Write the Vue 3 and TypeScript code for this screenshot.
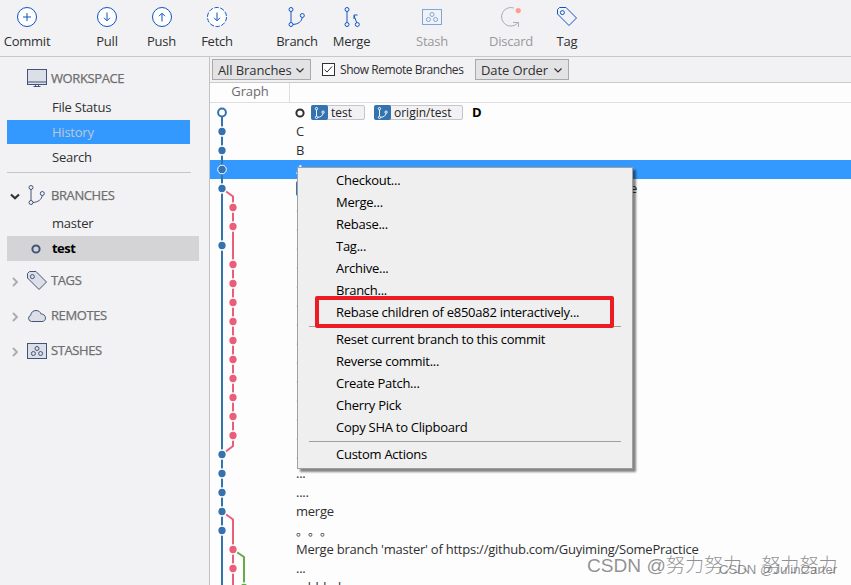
<script setup lang="ts">
import { defineComponent, h } from 'vue'

type Shape = [string, Record<string, string | number>]

const icons: Record<string, Shape[]> = {
  commit: [['circle', { cx: 12, cy: 12, r: 9.5, fill: '#fff' }], ['path', { d: 'M12 8v8M8 12h8' }]],
  pull: [['circle', { cx: 12, cy: 12, r: 9.5, fill: '#fff' }], ['path', { d: 'M12 7.5v8M9 12.8l3 3 3-3' }]],
  push: [['circle', { cx: 12, cy: 12, r: 9.5, fill: '#fff' }], ['path', { d: 'M12 16.5v-8M9 11.2l3-3 3 3' }]],
  fetch: [['circle', { cx: 12, cy: 12, r: 9.5, fill: '#fff', 'stroke-dasharray': '4.4 1.57' }], ['path', { d: 'M12 7.5v8M9 12.8l3 3 3-3' }]],
  branch: [
    ['path', { d: 'M6 6.5v11M17.2 12.5c-.4 4-4 6.6-9.2 7' }],
    ['circle', { cx: 6, cy: 4.5, r: 2 }], ['circle', { cx: 6, cy: 19.5, r: 2 }], ['circle', { cx: 17.3, cy: 10.5, r: 2 }],
  ],
  merge: [
    ['path', { d: 'M7 6.5v11M16.7 17.6L14.2 11M14 14V10h3.500' }],
    ['circle', { cx: 7, cy: 4.5, r: 2 }], ['circle', { cx: 7, cy: 19.5, r: 2 }], ['circle', { cx: 17.3, cy: 19.5, r: 2 }],
  ],
  stash: [
    ['rect', { x: 2.5, y: 4.5, width: 19, height: 15 }],
    ['circle', { cx: 12, cy: 9.5, r: 2 }], ['circle', { cx: 8.4, cy: 14.5, r: 2 }], ['circle', { cx: 15.6, cy: 14.5, r: 2 }],
  ],
  discard: [
    ['path', { d: 'M14.8 3A9.3 9.3 0 1 0 18.8 18M14 17.5h5.5v4.5' }],
    ['circle', { cx: 19.2, cy: 5.6, r: 2.6, fill: '#ff9c8e', stroke: 'none' }],
  ],
  tag: [
    ['path', { d: 'M2.5 4.5l2-2H11L21.5 13 14 20.5 2.5 9z' }],
    ['circle', { cx: 7.4, cy: 7.6, r: 2 }],
  ],
  monitor: [
    ['rect', { x: 2.5, y: 3.5, width: 19, height: 15 }],
    ['path', { d: 'M2.5 16h19M10.5 18.5v2M13.5 18.5v2M8.5 20.5h7' }],
  ],
  cloud: [['path', { d: 'M6.5 17.5a3.2 3.2 0 0 1-.8-6.2C6 8.3 8.2 6.5 11 6.5c2.6 0 4.3 1.4 4.9 3.4 2.6.1 4.6 1.7 4.6 4 0 2.200-1.400 3.600-3.500 3.600z' }]],
  down: [['path', { d: 'M8 10.5l4 3.8 4-3.8', 'stroke-width': 2.2 }]],
  right: [['path', { d: 'M10 8l4 4-4 4', 'stroke-width': 1.8 }]],
  caret: [['path', { d: 'M8.5 10.5L12 14l3.5-3.5', 'stroke-width': 1.2 }]],
  ring: [['circle', { cx: 12, cy: 12, r: 3.6, 'stroke-width': 2 }]],
  check: [['rect', { x: 6.5, y: 5.5, width: 12, height: 12, fill: '#fff' }], ['path', { d: 'M8.5 11.5l2.5 2.6 5-5.6' }]],
}

const Icon = defineComponent({
  props: { name: { type: String, required: true } },
  setup: (props) => () =>
    h('svg', { viewBox: '0 0 24 24', width: 24, height: 24, fill: 'none', stroke: 'currentColor', 'stroke-width': 1 },
      icons[props.name].map(([tag, attrs]) => h(tag, attrs))),
})

const tools = [
  { label: 'Commit', icon: 'commit', col: 1 },
  { label: 'Pull', icon: 'pull', col: 3 },
  { label: 'Push', icon: 'push', col: 4 },
  { label: 'Fetch', icon: 'fetch', col: 5 },
  { label: 'Branch', icon: 'branch', col: 7 },
  { label: 'Merge', icon: 'merge', col: 8 },
  { label: 'Stash', icon: 'stash', col: 10, state: 'off' },
  { label: 'Discard', icon: 'discard', col: 12, state: 'off gray' },
  { label: 'Tag', icon: 'tag', col: 13 },
]

const collapsed = [
  { label: 'TAGS', icon: 'tag' },
  { label: 'REMOTES', icon: 'cloud' },
  { label: 'STASHES', icon: 'stash' },
]

const messages: string[] = [
  'D', 'C', 'B', 'A', 'e',
  ...Array<string>(14).fill('...'),
  '...', '....', 'merge', '。。。',
  "Merge branch 'master' of https://github.com/Guyiming/SomePractice", '...', 'adddad',
]

const menu = [
  ['Checkout...', 'Merge...', 'Rebase...', 'Tag...', 'Archive...', 'Branch...', 'Rebase children of e850a82 interactively...'],
  ['Reset current branch to this commit', 'Reverse commit...', 'Create Patch...', 'Cherry Pick', 'Copy SHA to Clipboard'],
  ['Custom Actions'],
]

const rowY = (row: number): number => row * 19 + 9.5
const blueRows = [1, 2, 4, 7, 18, 19, 20, 21, 22]
const pinkRows = [5, 6, 8, 9, 10, 11, 12, 13, 14, 15, 16, 17, 23, 24]
</script>

<template>
  <div class="app">
    <header class="toolbar">
      <div v-for="t in tools" :key="t.label" class="tool" :class="[t.state, 'c' + t.col]">
        <Icon :name="t.icon" />
        <span>{{ t.label }}</span>
      </div>
    </header>
    <div class="body">
      <aside class="sidebar">
        <div class="section workspace"><i class="chev"></i><Icon name="monitor" class="filled" /><span>WORKSPACE</span></div>
        <div class="entry">File Status</div>
        <div class="entry chosen">History</div>
        <div class="entry search">Search</div>
        <div class="rule"></div>
        <div class="section branches"><Icon name="down" class="chev dark" /><Icon name="branch" /><span>BRANCHES</span></div>
        <div class="entry">master</div>
        <div class="entry current"><Icon name="ring" class="ring" />test</div>
        <div class="groups">
          <div v-for="g in collapsed" :key="g.label" class="section">
            <Icon name="right" class="chev" /><Icon :name="g.icon" class="filled" /><span>{{ g.label }}</span>
          </div>
        </div>
      </aside>
      <main class="main">
        <div class="filters">
          <div class="select all"><span>All Branches</span><Icon name="caret" /></div>
          <div class="check"><Icon name="check" /><span>Show Remote Branches</span></div>
          <div class="select order"><span>Date Order</span><Icon name="caret" /></div>
        </div>
        <div class="head"><div class="graph-head">Graph</div></div>
        <div class="log">
          <div v-for="(m, i) in messages" :key="i" class="row" :class="{ selected: i === 3 }">
            <template v-if="i === 0">
              <Icon name="ring" class="head-ring" />
              <span class="ref"><b><Icon name="branch" /></b><span>test</span></span>
              <span class="ref origin"><b><Icon name="branch" /></b><span>origin/test</span></span>
              <strong>{{ m }}</strong>
            </template>
            <template v-else-if="i === 4">
              <span class="ref"><b><Icon name="branch" /></b></span>
              <span class="tail">{{ m }}</span>
            </template>
            <span v-else :class="{ stops: i === 22 }">{{ m }}</span>
          </div>
          <svg class="graph" width="80" height="482" fill="none" stroke-width="2">
            <path class="blue" d="M12 9.5V482" />
            <path class="pink" d="M12 85.5l11 8V343l-11 8.5M12 408.5l11 8V482" />
            <path class="green" d="M23 446.5l11 7.5V482" />
            <g class="nodes">
              <circle v-for="r in blueRows" :key="'b' + r" class="blue" cx="12" :cy="rowY(r)" r="4.400" />
              <circle v-for="r in pinkRows" :key="'p' + r" class="pink" cx="23" :cy="rowY(r)" r="4.400" />
              <circle class="green" cx="34" :cy="rowY(25)" r="4.400" />
            </g>
            <circle class="blue picked" cx="12" :cy="rowY(3)" r="4.300" />
            <circle class="tip" cx="12" cy="9.5" r="3.900" />
          </svg>
          <div class="menu">
            <div v-for="(group, g) in menu" :key="g" class="group">
              <div v-for="item in group" :key="item" class="item">{{ item }}</div>
            </div>
            <div class="highlight"></div>
          </div>
        </div>
      </main>
    </div>
    <div class="mark big">CSDN @努力努力、努力努力</div>
    <div class="mark small">CSDN @JulinCarter</div>
  </div>
</template>

<style>
body { margin: 0; overflow: hidden; }
</style>

<style scoped>
.app { position: relative; width: 851px; height: 585px; overflow: hidden; display: flex; flex-direction: column; background: #f2f2f5; font: 13px/19px "Open Sans", "Noto Sans", "Noto Sans CJK SC", sans-serif; letter-spacing: -.23px; color: #303030; white-space: nowrap; }
svg { display: block; flex: none; }
.toolbar { height: 56px; flex: none; display: grid; grid-template-columns: 54px 26px 54px 55px 56px 24px 56px 53px 24px 60px 19px 60px 52px; border-bottom: 1px solid #c8c8cb; }
.tool { display: flex; flex-direction: column; align-items: center; padding-top: 5px; color: #0b55c5; grid-row: 1; }
.tool span { color: #303030; margin-top: 3px; }
.tool.off { color: #7da5df; }
.tool.gray { color: #a6adba; }
.tool.off span { color: #999; }
.c1 { grid-column: 1; } .c3 { grid-column: 3; } .c4 { grid-column: 4; } .c5 { grid-column: 5; } .c7 { grid-column: 7; }
.c8 { grid-column: 8; } .c10 { grid-column: 10; } .c12 { grid-column: 12; } .c13 { grid-column: 13; }
.body { flex: 1; min-height: 0; display: flex; }
.sidebar { width: 209px; flex: none; border-right: 1px solid #c2c2c5; }
.section { height: 35px; display: flex; align-items: center; color: #42547a; }
.section span { margin-left: 2px; color: #6e6e6e; -webkit-text-stroke: .25px #6e6e6e; letter-spacing: -.4px; }
.section .chev { width: 24px; margin: 2px -2px 0 3px; color: #aaa; }
.section .dark { color: #333; }
.section .filled { fill: #dcdfe8; }
.workspace { height: 22px; margin: 10px 0 6px; }
.entry { height: 25px; margin: 0 10px 0 7px; padding-left: 45px; display: flex; align-items: center; box-sizing: border-box; }
.chosen { height: 24px; margin-right: 19px; background: #3399ff; color: #bfc7d4; }
.search { height: 28px; padding-bottom: 1px; }
.rule { height: 1px; margin: 0 18px 0 7px; background: #c5c5c8; }
.branches { height: 32px; margin-top: 6px; }
.current { background: #d4d4d6; color: #000; font-weight: 700; padding-left: 17px; letter-spacing: -.55px; }
.ring { color: #42547a; margin-right: 4px; }
.groups { padding-top: 2px; }
.main { flex: 1; min-width: 0; display: flex; flex-direction: column; }
.filters { height: 25px; flex: none; display: flex; align-items: flex-start; border-bottom: 1px solid #cacacd; }
.select { box-sizing: border-box; height: 21px; margin-top: 2px; border: 1px solid #a9a9a9; background: #e3e3e5; display: flex; align-items: center; justify-content: space-between; padding-left: 5px; letter-spacing: -.1px; }
.select span { padding-top: 2px; }
.select svg { margin-right: -2px; }
.all { width: 99px; margin-left: 2px; }
.all svg, .order svg { margin: 0 -3px 0 -8px; transform: translateX(-1px); }
.order { width: 94px; margin-left: 12px; }
.check { width: 146px; margin-left: 6px; height: 25px; display: flex; align-items: center; font-size: 12px; letter-spacing: -.45px; }
.check svg { margin: 1px 0 0 -1px; }
.head { height: 19px; flex: none; background: #fdfdfe; border-bottom: 1px solid #dedee1; }
.graph-head { width: 79px; height: 19px; border-right: 1px solid #dedee1; text-align: center; color: #6c6c6c; line-height: 17px; letter-spacing: -.1px; text-indent: 1px; }
.log { position: relative; flex: 1; min-height: 0; background: #fdfdfe; overflow: hidden; }
.row { height: 19px; padding-left: 86px; display: flex; align-items: center; }
.selected { background: #3399ff; color: #fff; }
.stops { font-family: "Noto Sans CJK SC", sans-serif; font-size: 12px; letter-spacing: 0; text-spacing-trim: space-all; font-feature-settings: "halt" 0, "chws" 0; }
.head-ring { margin: 0 -1px 0 -8px; }
.ref { box-sizing: border-box; height: 15px; width: 54px; border: 1px solid #c5c5c8; border-radius: 2px; background: #f2f2f5; display: flex; align-items: center; font-size: 12px; letter-spacing: 0; color: #222; }
.ref b { width: 17px; height: 15px; margin: 0 3px 0 -1px; flex: none; overflow: hidden; border-radius: 2px; background: #3572b0; color: #fff; display: flex; align-items: center; justify-content: center; }
.ref svg { width: 14px; height: 14px; stroke-width: 1.6; }
.origin { width: 89px; margin-left: 9px; }
.row strong { margin-left: 9px; color: #000; }
.tail { margin-left: 280px; }
.graph { position: absolute; left: 0; top: 0; }
path.blue { stroke: #3572b0; } path.pink { stroke: #eb5e7a; } path.green { stroke: #67ab49; }
.nodes { stroke: #fdfdfe; stroke-width: 1.5; }
circle.blue { fill: #3572b0; } circle.pink { fill: #eb5e7a; } circle.green { fill: #67ab49; }
.picked { stroke: #fff; stroke-width: 1; }
.tip { fill: #fff; stroke: #3572b0; }
.menu { position: absolute; left: 87px; top: 64px; width: 336px; height: 302px; box-sizing: border-box; border: 1px solid #a0a0a0; background: #efefef; box-shadow: 3px 3px 2px rgba(0, 0, 0, .48); padding: 2px 11px; color: #000; }
.group + .group { border-top: 1px solid #a0a0a0; margin-top: 2px; padding-top: 2px; }
.item { height: 22px; line-height: 20px; padding-left: 27px; letter-spacing: -.26px; }
.highlight { position: absolute; left: 17px; top: 128px; width: 299px; height: 32px; box-sizing: border-box; border: 4px solid #ed1c24; border-radius: 2px; }
.mark { position: absolute; font-family: "Liberation Sans", "Noto Sans CJK SC", sans-serif; letter-spacing: 0; color: rgba(110, 110, 110, .75); }
.big { left: 587px; top: 553px; font-size: 19.1px; line-height: 26px; font-weight: 300; }
.small { left: 719px; top: 560px; font-size: 13.2px; line-height: 20px; }
</style>
